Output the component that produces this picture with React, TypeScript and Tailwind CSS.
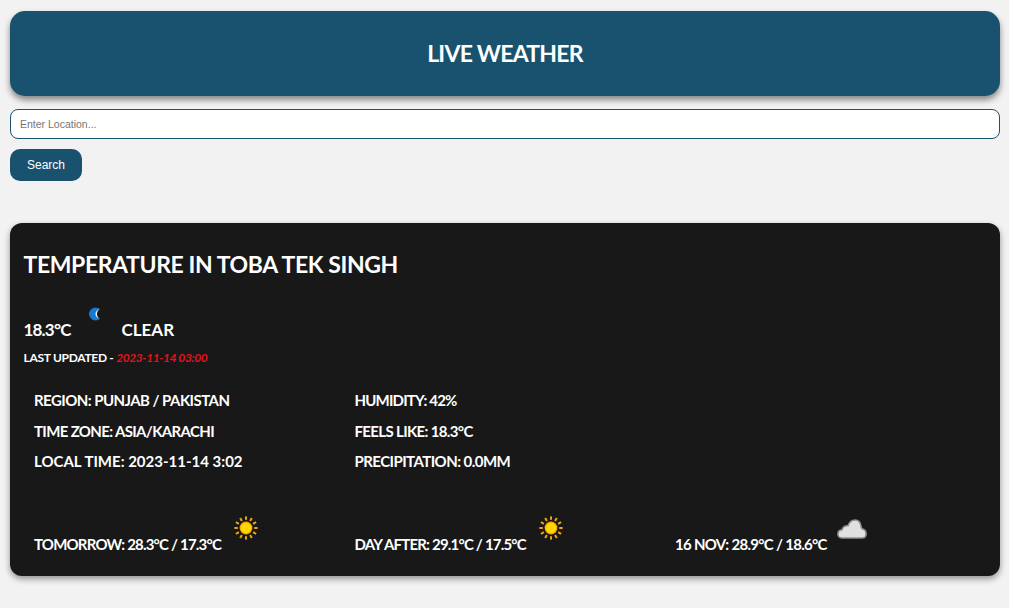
const heading = { fontFamily: '"Lato", "Liberation Sans", sans-serif' }

function Sun() {
  const rays = [0, 30, 60, 90, 120, 150, 180, 210, 240, 270, 300, 330]
  return (
    <svg width="24" height="24" viewBox="0 0 24 24">
      {rays.map((deg) => (
        <rect key={deg} x="11" y="0.4" width="2" height="3.4" fill="#eba50f" transform={`rotate(${deg} 12 12)`} />
      ))}
      <circle cx="12" cy="12" r="6.4" fill="#f9a90b" />
      <circle cx="12" cy="12" r="5" fill="#ffd800" />
    </svg>
  )
}

function Cloud() {
  return (
    <svg width="30" height="20" viewBox="0 0 30 20">
      <path
        d="M5 19C2.4 19 .9 17 .9 15C.9 12.6 2.8 11 5 10.7C6 7.8 8.8 6.2 11 6.8C12.4 2.8 15.4 .9 18 .9C21.4 .9 23.6 3.6 24 7.2C24.2 8.6 24.4 9.2 25 9.8C27.4 10.4 29.1 12.6 29.1 15C29.1 17.4 27.4 19 25 19Z"
        fill="#e0e0e0"
        stroke="#8f8f8f"
        strokeWidth="1.5"
      />
    </svg>
  )
}

function Moon() {
  return (
    <svg width="13" height="14" viewBox="0 0 13 14">
      <path d="M11 2.3A6.5 6.5 0 1 0 11 11.7A4.69 4.69 0 0 1 11 2.3Z" fill="#1479d2" />
      <path d="M11 2.3A4.69 4.69 0 0 0 11 11.7A5.17 5.17 0 0 1 11 2.3Z" fill="#e4f1fc" />
    </svg>
  )
}

function Detail({ text, track }: { text: string; track: string }) {
  return <p className={`text-[15px] leading-[20px] font-bold whitespace-nowrap text-white uppercase ${track}`}>{text}</p>
}

export default function App() {
  return (
    <div className="min-h-[608px] bg-[#f2f2f2] pt-[11px] pr-[9px] pl-[10px]" style={heading}>
      <header className="flex h-[85px] items-center justify-center rounded-[15px] bg-[#18526e] shadow-[0_4px_6px_rgba(0,0,0,0.45)]">
        <h1 className="text-[23px] font-bold tracking-[-0.75px] text-white uppercase">Live Weather</h1>
      </header>

      <input
        type="text"
        placeholder="Enter Location..."
        className="mt-[13px] block h-[30px] w-full rounded-[8px] border border-[#18526e] bg-white px-[9px] text-[10.5px] text-black placeholder:text-[#757575]"
        style={{ fontFamily: '"Liberation Sans", sans-serif' }}
      />
      <button
        className="mt-[10px] block h-[32px] w-[72px] rounded-[10px] bg-[#18526e] text-[12px] text-white"
        style={{ fontFamily: '"Liberation Sans", sans-serif' }}
      >
        Search
      </button>

      <main className="mt-[42px] h-[353px] rounded-[12px] bg-[#181818] pt-[26px] pr-[14px] pl-[13.5px] shadow-[0_3px_6px_rgba(0,0,0,0.4)]">
        <h2 className="text-[23px] leading-[30px] font-bold tracking-[-0.4px] whitespace-nowrap text-white uppercase">
          Temperature in Toba Tek Singh
        </h2>

        <div className="mt-[32px] flex h-[30px] items-end text-[17px] leading-[22px] font-bold text-white uppercase">
          <span className="w-[66px] tracking-[-0.8px]">18.3°C</span>
          <span className="mb-[20px] -ml-[1px] w-[33px]">
            <Moon />
          </span>
          <span>Clear</span>
        </div>

        <p className="mt-[9px] text-[12px] leading-[16px] font-bold tracking-[-0.3px] text-white uppercase">
          Last Updated - <span className="tracking-[-0.4px] text-[#e0141c] italic">2023-11-14 03:00</span>
        </p>

        <div className="mt-[24px] grid grid-cols-[320.5px_1fr] gap-y-[10.5px] pl-[10.5px]">
          <Detail text="Region: Punjab / Pakistan" track="tracking-[-0.55px]" />
          <Detail text="Humidity: 42%" track="tracking-[-0.8px]" />
          <Detail text="Time Zone: Asia/Karachi" track="tracking-[-0.65px]" />
          <Detail text="Feels Like: 18.3°C" track="tracking-[-0.65px]" />
          <Detail text="Local Time: 2023-11-14 3:02" track="tracking-[0px]" />
          <Detail text="Precipitation: 0.0mm" track="tracking-[-0.55px]" />
        </div>

        <div className="mt-[33px] grid h-[50px] grid-cols-[320.5px_320.5px_1fr] items-end pl-[10.5px]">
          <div className="flex items-end gap-[13px]">
            <Detail text="Tomorrow: 28.3°C / 17.3°C" track="tracking-[-0.8px]" />
            <span className="mb-[14px]">
              <Sun />
            </span>
          </div>
          <div className="flex items-end gap-[13px]">
            <Detail text="Day After: 29.1°C / 17.5°C" track="tracking-[-0.8px]" />
            <span className="mb-[14px]">
              <Sun />
            </span>
          </div>
          <div className="flex items-end gap-[10px]">
            <Detail text="16 Nov: 28.9°C / 18.6°C" track="tracking-[-0.7px]" />
            <span className="mb-[15px]">
              <Cloud />
            </span>
          </div>
        </div>
      </main>
    </div>
  )
}
